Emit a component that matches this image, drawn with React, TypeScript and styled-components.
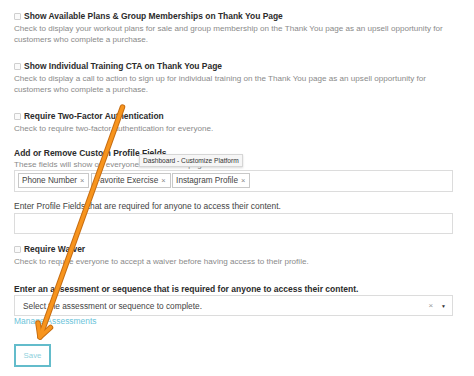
import { createGlobalStyle } from 'styled-components'
import styled from 'styled-components'

const GlobalStyle = createGlobalStyle`
	html, body {
		margin: 0;
		padding: 0;
		background: #fff;
	}
	body {
		font-family: 'Liberation Sans', Arial, Helvetica, sans-serif;
		color: #333;
		-webkit-font-smoothing: antialiased;
	}
`

const checkOptions = [
	{
		title: 'Show Available Plans & Group Memberships on Thank You Page',
		desc: 'Check to display your workout plans for sale and group membership on the Thank You page as an upsell opportunity for customers who complete a purchase.',
	},
	{
		title: 'Show Individual Training CTA on Thank You Page',
		desc: 'Check to display a call to action to sign up for individual training on the Thank You page as an upsell opportunity for customers who complete a purchase.',
	},
	{
		title: 'Require Two-Factor Authentication',
		desc: 'Check to require two-factor authentication for everyone.',
	},
]

const profileTags = ['Phone Number', 'Favorite Exercise', 'Instagram Profile']

const CheckOption = ({ title, desc, top }: { title: string; desc: string; top: number }) => (
	<Block $top={top}>
		<OptionTitle>
			<CheckBox />
			{title}
		</OptionTitle>
		<Help>{desc}</Help>
	</Block>
)

const App = () => {
	return (
		<>
			<GlobalStyle />
			<Page>
				{checkOptions.map((o, i) => (
					<CheckOption key={o.title} title={o.title} desc={o.desc} top={i === 0 ? 0 : 15.5} />
				))}

				<Block $top={14.5}>
					<BoldLabel>Add or Remove Custom Profile Fields</BoldLabel>
					<Help>These fields will show on everyone&apos;s Edit Profile page.</Help>
					<TagBox>
						{profileTags.map((t) => (
							<Tag key={t}>
								{t}
								<TagX>×</TagX>
							</Tag>
						))}
					</TagBox>
				</Block>

				<Block $top={8}>
					<PlainLabel>Enter Profile Fields that are required for anyone to access their content.</PlainLabel>
					<TextInput />
				</Block>

				<CheckOption top={9} title='Require Waiver' desc='Check to require everyone to accept a waiver before having access to their profile.' />

				<Block $top={16.5}>
					<BoldLabel $lh={12}>Enter an assessment or sequence that is required for anyone to access their content.</BoldLabel>
					<SelectBox>
						<SelectText>Select the assessment or sequence to complete.</SelectText>
						<SelectClear>×</SelectClear>
						<Caret>▼</Caret>
					</SelectBox>
					<ManageLink>Manage Assessments</ManageLink>
				</Block>

				<SaveButton>Save</SaveButton>

				<Tooltip>Dashboard - Customize Platform</Tooltip>
				<Arrow viewBox='0 0 474 376'>
					<g strokeLinecap='round' strokeLinejoin='round' fill='none'>
						<g stroke='#c66d12' strokeWidth='5.5'>
							<line x1='122.5' y1='107' x2='40' y2='337' />
							<polyline points='50.5,327.5 40,337 38,323' />
						</g>
						<g stroke='#f7941d' strokeWidth='3.6'>
							<line x1='122.5' y1='107' x2='40' y2='337' />
							<polyline points='50.5,327.5 40,337 38,323' />
						</g>
					</g>
				</Arrow>
			</Page>
		</>
	)
}

export default App

const Page = styled.div`
	position: relative;
	display: flex;
	flex-direction: column;
	align-items: stretch;
	width: 474px;
	height: 376px;
	box-sizing: border-box;
	padding: 10px 21px 0 14px;
	overflow: hidden;
`

const Block = styled.div<{ $top: number }>`
	margin-top: ${(p) => p.$top}px;
`

const OptionTitle = styled.div`
	display: flex;
	align-items: center;
	font-size: 8.45px;
	font-weight: 700;
	line-height: 12px;
	color: #2b2b2b;
`

const CheckBox = styled.span`
	display: inline-block;
	width: 5px;
	height: 5px;
	margin-right: 3px;
	border: 1px solid #cfcfcf;
	border-radius: 1px;
	background: #fafafa;
`

const Help = styled.div`
	margin-top: 0.5px;
	font-size: 8.1px;
	line-height: 11px;
	color: #8a8a8a;
`

const BoldLabel = styled.div<{ $lh?: number }>`
	font-size: 8.5px;
	font-weight: 700;
	line-height: ${(p) => p.$lh ?? 10}px;
	color: #2b2b2b;
`

const PlainLabel = styled.div`
	font-size: 8.45px;
	line-height: 12px;
	color: #444;
	margin-bottom: 1px;
`

const TagBox = styled.div`
	display: flex;
	gap: 1.5px;
	height: 22px;
	box-sizing: border-box;
	padding: 2px 3px 0 3px;
	margin-top: 0.5px;
	border: 1px solid #dcdcdc;
`

const Tag = styled.span`
	display: inline-flex;
	align-items: center;
	height: 15px;
	box-sizing: border-box;
	padding: 0 4px 0 3px;
	border: 1px solid #c8c8c8;
	font-size: 8.2px;
	color: #444;
	background: #fff;
`

const TagX = styled.span`
	margin-left: 3px;
	font-size: 7.5px;
	color: #888;
`

const TextInput = styled.div`
	height: 21px;
	box-sizing: border-box;
	border: 1px solid #dcdcdc;
`

const SelectBox = styled.div`
	display: flex;
	align-items: center;
	height: 21px;
	box-sizing: border-box;
	padding: 0 6px 0 8px;
	border: 1px solid #dcdcdc;
	font-size: 8.3px;
	color: #444;
`

const SelectText = styled.span`
	flex: 1;
`

const SelectClear = styled.span`
	color: #999;
	font-size: 8px;
	margin-right: 8px;
`

const Caret = styled.span`
	font-size: 5px;
	color: #333;
`

const ManageLink = styled.a`
	display: block;
	font-size: 8.45px;
	line-height: 10px;
	color: #6cc4da;
	cursor: pointer;
`

const SaveButton = styled.button`
	align-self: flex-start;
	margin-top: 18px;
	width: 37px;
	height: 23px;
	padding: 0;
	border: 2px solid #63bccb;
	background: #fff;
	font-family: inherit;
	font-size: 7.8px;
	color: #8ed0dc;
`

const Tooltip = styled.div`
	position: absolute;
	left: 139px;
	top: 154px;
	padding: 1px 3px;
	font-size: 6.6px;
	line-height: 9px;
	color: #333;
	background: #f6f6f6;
	border: 1px solid #d6d6d6;
	box-shadow: 0 1px 2px rgba(0, 0, 0, 0.15);
	white-space: nowrap;
`

const Arrow = styled.svg`
	position: absolute;
	left: 0;
	top: 0;
	width: 474px;
	height: 376px;
	pointer-events: none;
`
